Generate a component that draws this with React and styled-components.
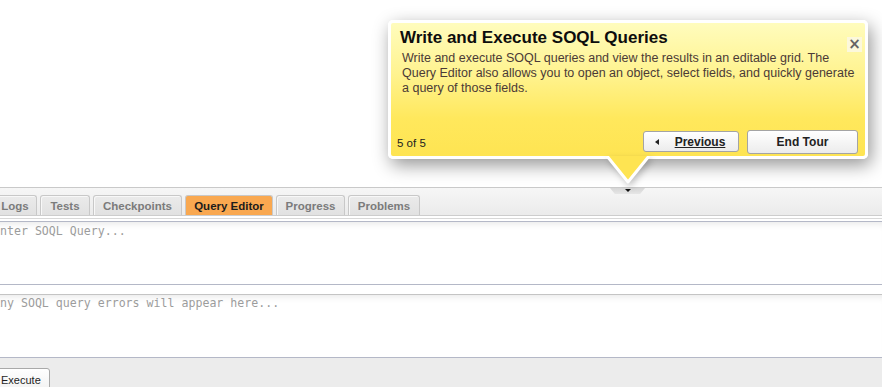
import React from 'react'
import styled, { createGlobalStyle } from 'styled-components'

const Global = createGlobalStyle`
  html, body {
    margin: 0;
    padding: 0;
    background: #fff;
    overflow: hidden;
  }
  body {
    font-family: "Liberation Sans", Arial, sans-serif;
  }
`

const Page = styled.div`
  position: relative;
  width: 882px;
  height: 387px;
  overflow: hidden;
  display: flex;
  flex-direction: column;
  background: #fff;
`

const Stage = styled.div`
  flex: none;
  height: 187px;
`

const Splitter = styled.div`
  position: relative;
  flex: none;
  height: 0;
  border-top: 1px solid #c9c9c9;
`

const SplitHandle = styled.div`
  position: absolute;
  left: 610px;
  top: 0;
  width: 35px;
  height: 6px;
  background: linear-gradient(#d6d6d6, #e6e6e6);
  clip-path: polygon(0 0, 100% 0, 86% 100%, 14% 100%);
  z-index: 2;

  &::after {
    content: '';
    position: absolute;
    left: 15px;
    top: 1px;
    border-left: 3px solid transparent;
    border-right: 3px solid transparent;
    border-top: 3px solid #111;
  }
`

const Panel = styled.div`
  flex: 1;
  margin-left: -12px;
  display: flex;
  flex-direction: column;
`

const TabBar = styled.div`
  flex: none;
  height: 27px;
  display: flex;
  align-items: flex-end;
  gap: 3px;
  padding-left: 5px;
  background: linear-gradient(#f6f6f6, #ebebeb);
  border-bottom: 1px solid #cdcdcd;
`

const Tab = styled.div`
  box-sizing: border-box;
  width: ${p => p.$w}px;
  height: 20px;
  display: flex;
  align-items: center;
  justify-content: center;
  border: 1px solid #c8c8c8;
  border-bottom: none;
  border-radius: 3px 3px 0 0;
  background: ${p => (p.$active ? '#f9a850' : 'linear-gradient(#ebebeb, #e1e1e1)')};
  box-shadow: ${p => (p.$active ? 'none' : 'inset 1px 1px 0 #f8f8f8')};
  color: ${p => (p.$active ? '#1c1c1c' : '#7b7b7b')};
  font-size: 11.5px;
  font-weight: bold;
`

const TabFoot = styled.div`
  flex: none;
  height: 5px;
  background: linear-gradient(#fff 2px, #d8d8d8 2px, #d8d8d8 3px, #fff 3px);
`

const EditBox = styled.div`
  flex: none;
  height: 64px;
  padding: ${p => p.$pad} 5px 0;
  box-sizing: border-box;
  border-top: 1px solid ${p => p.$top};
  border-bottom: 1px solid #b4b8c7;
  box-shadow: inset 0 7px 7px -5px rgba(0, 0, 0, 0.09);
  font-family: "DejaVu Sans Mono", "Liberation Mono", monospace;
  font-size: 11.6px;
  line-height: 14px;
  color: #9c9c9c;
  white-space: nowrap;
`

const Gap = styled.div`
  flex: none;
  height: 9px;
`

const BottomBar = styled.div`
  flex: 1;
  background: #ececec;
  padding: 10px 0 0 3px;
`

const ExecButton = styled.div`
  display: inline-block;
  height: 24px;
  padding: 5px 8px 0 9px;
  box-sizing: border-box;
  border: 1px solid #a9a9a9;
  border-radius: 0 3px 0 0;
  background: linear-gradient(#ffffff, #f1f1f1);
  font-size: 11px;
  color: #1e1e1e;
`

const Popup = styled.div`
  position: absolute;
  left: 388px;
  top: 20px;
  width: 480px;
  height: 139px;
  box-sizing: border-box;
  border: 3px solid #fff;
  border-radius: 5px;
  background: linear-gradient(#fffcbd 0%, #fff390 38%, #ffe85c 72%, #fee452 100%);
  box-shadow: 3px 6px 18px rgba(0, 0, 0, 0.42);
  display: flex;
  flex-direction: column;
  padding: 6px 7px 2px 9px;
  z-index: 5;
`

const Title = styled.div`
  font-size: 17px;
  font-weight: bold;
  line-height: 18px;
  color: #0d0d0d;
`

const Body = styled.div`
  width: 455px;
  margin: 4px 0 0 2px;
  font-size: 12.5px;
  line-height: 15px;
  color: #4b3a36;
`

const Footer = styled.div`
  margin-top: auto;
  display: flex;
  align-items: center;
  gap: 8px;
`

const Counter = styled.div`
  flex: 1;
  margin: 3px 0 0 -3px;
  font-size: 11.5px;
  color: #222;
`

const TourButton = styled.div`
  box-sizing: border-box;
  width: ${p => p.$w}px;
  height: ${p => p.$h}px;
  display: flex;
  align-items: center;
  justify-content: center;
  gap: 16px;
  border: 1px solid #a4a4a4;
  border-radius: 3px;
  background: linear-gradient(#ffffff, #ececec);
  box-shadow: inset 0 1px 0 #fff;
  font-size: 12px;
  font-weight: bold;
  color: #222;
  text-decoration: ${p => (p.$link ? 'underline' : 'none')};
  margin-top: ${p => p.$mt || 0}px;
`

const BackArrow = styled.span`
  width: 0;
  height: 0;
  border-top: 3.5px solid transparent;
  border-bottom: 3.5px solid transparent;
  border-right: 4px solid #222;
  margin-left: -2px;
`

const Close = styled.div`
  position: absolute;
  right: 3px;
  top: 14px;
  width: 15px;
  height: 15px;
  display: flex;
  align-items: center;
  justify-content: center;
  background: #fcf8dc;
  color: #646464;
  font-family: "DejaVu Sans", sans-serif;
  font-size: 15px;
  font-weight: bold;
  line-height: 1;
`

const Pointer = styled.svg`
  position: absolute;
  left: 215px;
  top: 100%;
  filter: drop-shadow(2px 3px 3px rgba(0, 0, 0, 0.22));
`

const tabs = [
  { label: 'Logs', w: 44 },
  { label: 'Tests', w: 50 },
  { label: 'Checkpoints', w: 89 },
  { label: 'Query Editor', w: 88, active: true },
  { label: 'Progress', w: 69 },
  { label: 'Problems', w: 72 },
]

export default function App() {
  return (
    <Page>
      <Global />
      <Stage />
      <Splitter>
        <SplitHandle />
      </Splitter>
      <Panel>
        <TabBar>
          {tabs.map(t => (
            <Tab key={t.label} $w={t.w} $active={t.active}>
              {t.label}
            </Tab>
          ))}
        </TabBar>
        <TabFoot />
        <EditBox $top="#b4b8c7" $pad="2px">Enter SOQL Query...</EditBox>
        <Gap />
        <EditBox $top="#c4c4c4" $pad="1px">Any SOQL query errors will appear here...</EditBox>
        <BottomBar>
          <ExecButton>Execute</ExecButton>
        </BottomBar>
      </Panel>

      <Popup>
        <Title>Write and Execute SOQL Queries</Title>
        <Body>
          Write and execute SOQL queries and view the results in an editable grid. The
          Query Editor also allows you to open an object, select fields, and quickly generate
          a query of those fields.
        </Body>
        <Footer>
          <Counter>5 of 5</Counter>
          <TourButton $w={96} $h={21} $link>
            <BackArrow />
            <span>Previous</span>
          </TourButton>
          <TourButton $w={111} $h={24} $mt={1}>End Tour</TourButton>
        </Footer>
        <Close>×</Close>
        <Pointer width="44" height="28" viewBox="0 0 44 28">
          <path d="M1 0 L22 26 L43 0 Z" fill="#fee452" />
          <path d="M1 0 L22 26 L43 0" fill="none" stroke="#fff" strokeWidth="3" strokeLinejoin="round" />
        </Pointer>
      </Popup>
    </Page>
  )
}
